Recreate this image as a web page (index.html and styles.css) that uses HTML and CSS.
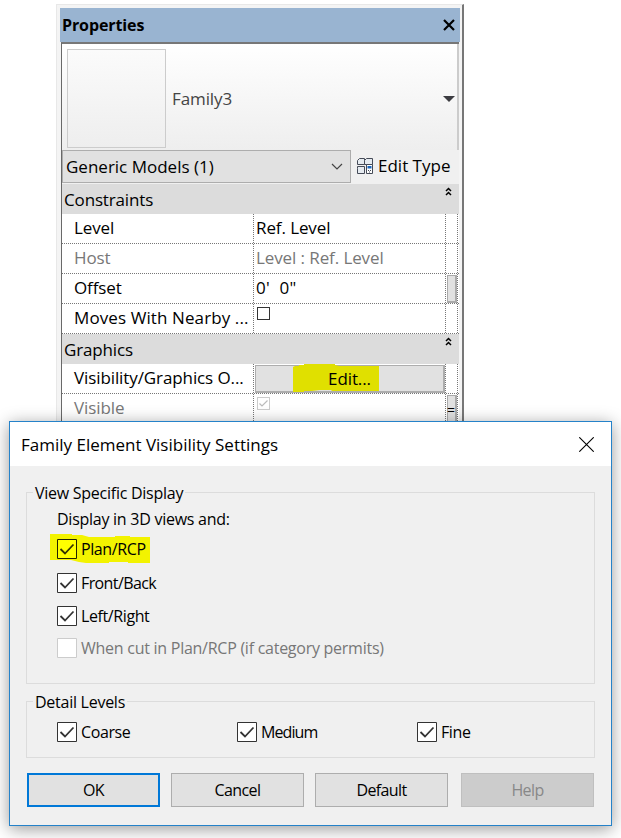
FILE: index.html
```html
<!DOCTYPE html>
<html lang="en">
<head>
    <meta charset="UTF-8">
    <meta name="viewport" content="width=device-width, initial-scale=1.0">
    <title>Family Element Visibility Settings</title>
    <link rel="stylesheet" href="styles.css">
</head>
<body>
    <!-- Properties palette -->
    <div class="palette">
        <div class="palette-title">
            <span>Properties</span>
            <svg width="14" height="12" viewBox="0 0 14 12"><path d="M2 1l10 10M12 1L2 11" stroke="#000" stroke-width="2.2"/></svg>
        </div>
        <div class="palette-body">
            <div class="type-selector">
                <div class="thumb"></div>
                <span>Family3</span>
                <svg width="12" height="6" viewBox="0 0 12 6"><path d="M0 0h12L6 6z" fill="#3c3c41"/></svg>
            </div>
            <div class="filter">
                <div class="combo">
                    <span>Generic Models (1)</span>
                    <svg width="12" height="8" viewBox="0 0 12 8"><path d="M1 1l5 5 5-5" fill="none" stroke="#444" stroke-width="1.2"/></svg>
                </div>
                <div class="edit-type">
                    <svg width="16" height="16" viewBox="0 0 16 16">
                        <path d="M2.500 .5h5v6h-7v-4zM.5 8.500h7v7h-7v-5z" fill="#e6ebf0" stroke="#454b58"/>
                        <path d="M7.500 6.500v-4l2-2h6v6z" fill="#e6ebf0" stroke="#454b58"/>
                        <path d="M9.500 6.500h6v9h-6z" fill="#fff" stroke="#454b58"/>
                        <path d="M10.500 8h4v2.500h-4z" fill="#1c67bd"/>
                        <path d="M11 12.500h1M13 12.500h1M12 14h1" stroke="#454b58"/>
                    </svg>
                    <span>Edit Type</span>
                </div>
            </div>

            <div class="section">
                <span>Constraints</span>
                <svg width="7" height="9" viewBox="0 0 7 9"><path d="M1 4l2.500-2.500L6 4M1 8l2.500-2.500L6 8" fill="none" stroke="#000" stroke-width="1.500"/></svg>
            </div>
            <div class="row">
                <div class="name"><span>Level</span></div>
                <div class="value"><span>Ref. Level</span></div>
                <div class="assoc"></div>
            </div>
            <div class="row disabled">
                <div class="name"><span>Host</span></div>
                <div class="value"><span>Level : Ref. Level</span></div>
                <div class="assoc"></div>
            </div>
            <div class="row">
                <div class="name"><span>Offset</span></div>
                <div class="value offset"><span>0'&nbsp; 0"</span></div>
                <div class="assoc"><i class="assoc-btn"></i></div>
            </div>
            <div class="row">
                <div class="name moves"><span>Moves With Nearby ...</span></div>
                <div class="value"><i class="small-check"></i></div>
                <div class="assoc"></div>
            </div>

            <div class="section">
                <span>Graphics</span>
                <svg width="7" height="9" viewBox="0 0 7 9"><path d="M1 4l2.500-2.500L6 4M1 8l2.500-2.500L6 8" fill="none" stroke="#000" stroke-width="1.500"/></svg>
            </div>
            <div class="row">
                <div class="name"><span>Visibility/Graphics O...</span></div>
                <div class="value edit-cell">
                    <div class="edit-btn">
                        <svg class="marker" width="86" height="29" viewBox="0 0 86 29"><path d="M0 3l2-1h4V1h5V0h31v1l4 1h40v25H39l-1-1H27l-8 1h-8v1H0z" fill="#e0e000"/></svg>
                        <span>Edit...</span>
                    </div>
                </div>
                <div class="assoc"></div>
            </div>
            <div class="row disabled">
                <div class="name"><span>Visible</span></div>
                <div class="value">
                    <i class="small-check off"><svg width="11" height="11" viewBox="0 0 11 11"><path d="M1.500 5.500L4 8l5.500-5.500" fill="none" stroke="#bbb" stroke-width="1.200"/></svg></i>
                </div>
                <div class="assoc"><i class="assoc-btn equals">=</i></div>
            </div>
        </div>
    </div>

    <!-- Visibility dialog -->
    <div class="dialog">
        <div class="dialog-title">
            <span>Family Element Visibility Settings</span>
            <svg width="15" height="15" viewBox="0 0 15 15"><path d="M.3 .3l14.400 14.400M14.700 .3L.3 14.700" stroke="#000" stroke-width="1.100"/></svg>
        </div>
        <div class="dialog-body">
            <fieldset class="display-group">
                <legend>View Specific Display</legend>
                <p>Display in 3D views and:</p>
                <div class="check plan">
                    <svg class="marker" width="100" height="30" viewBox="0 0 100 30"><path d="M0 0h22v1h10l7 2h26V2h15v1h20v26H78v-1H59v1H36l-7-1-8-2H0z" fill="#f3f300"/></svg>
                    <svg class="box" width="20" height="20" viewBox="0 0 20 20"><path d="M.5 .5h19v19H.5z" fill="#ff0" stroke="#222200"/><path d="M3.500 10l4.500 4.500L16.500 5.500" fill="none" stroke="#333300" stroke-width="1.800"/></svg>
                    <span>Plan/RCP</span>
                </div>
                <div class="check front">
                    <svg class="box" width="20" height="20" viewBox="0 0 20 20"><path d="M.5 .5h19v19H.5z" fill="#fff" stroke="#333"/><path d="M3.500 10l4.500 4.500L16.500 5.500" fill="none" stroke="#333" stroke-width="1.800"/></svg>
                    <span>Front/Back</span>
                </div>
                <div class="check left">
                    <svg class="box" width="20" height="20" viewBox="0 0 20 20"><path d="M.5 .5h19v19H.5z" fill="#fff" stroke="#333"/><path d="M3.500 10l4.500 4.500L16.500 5.500" fill="none" stroke="#333" stroke-width="1.800"/></svg>
                    <span>Left/Right</span>
                </div>
                <div class="check cut">
                    <svg class="box" width="20" height="20" viewBox="0 0 20 20"><path d="M.5 .5h19v19H.5z" fill="#fff" stroke="#ccc"/></svg>
                    <span>When cut in Plan/RCP (if category permits)</span>
                </div>
            </fieldset>

            <fieldset class="detail-group">
                <legend>Detail Levels</legend>
                <div class="levels">
                    <div class="check">
                        <svg class="box" width="20" height="20" viewBox="0 0 20 20"><path d="M.5 .5h19v19H.5z" fill="#fff" stroke="#333"/><path d="M3.500 10l4.500 4.500L16.500 5.500" fill="none" stroke="#333" stroke-width="1.800"/></svg>
                        <span>Coarse</span>
                    </div>
                    <div class="check medium">
                        <svg class="box" width="20" height="20" viewBox="0 0 20 20"><path d="M.5 .5h19v19H.5z" fill="#fff" stroke="#333"/><path d="M3.500 10l4.500 4.500L16.500 5.500" fill="none" stroke="#333" stroke-width="1.800"/></svg>
                        <span>Medium</span>
                    </div>
                    <div class="check">
                        <svg class="box" width="20" height="20" viewBox="0 0 20 20"><path d="M.5 .5h19v19H.5z" fill="#fff" stroke="#333"/><path d="M3.500 10l4.500 4.500L16.500 5.500" fill="none" stroke="#333" stroke-width="1.800"/></svg>
                        <span>Fine</span>
                    </div>
                </div>
            </fieldset>

            <div class="buttons">
                <button type="button" class="primary">OK</button>
                <button type="button">Cancel</button>
                <button type="button">Default</button>
                <button type="button" class="help" disabled>Help</button>
            </div>
        </div>
    </div>
</body>
</html>
```
FILE: styles.css
```css
* {
    box-sizing: border-box;
}

body {
    margin: 0;
    padding-top: 4px;
    height: 838px;
    overflow: hidden;
    background: #fff;
    color: #000;
    font-family: "Open Sans", "Noto Sans", sans-serif;
    font-size: 17px;
    line-height: 22px;
}

span {
    white-space: nowrap;
}

svg {
    display: block;
    flex: none;
}

/* Properties palette */
.palette {
    width: 408px;
    height: 417px;
    margin-left: 56px;
    padding: 3px 3px 0;
    border-top: 1px solid #e8e8e8;
    border-left: 1px solid #e8e8e8;
    border-right: 2px solid #777;
    background: #f4f4f4;
    overflow: hidden;
}

.palette-title {
    display: flex;
    align-items: center;
    justify-content: space-between;
    width: 400px;
    height: 34px;
    padding: 0 4px 0 2px;
    background: #99b4d1;
    font-weight: 700;
    font-size: 16px;
    letter-spacing: -0.1px;
}

.palette-body {
    width: 398px;
    margin-left: 1px;
    border-top: 2px solid #777;
    border-left: 1px solid #696969;
    background: #f0f0f0;
}

.type-selector {
    display: flex;
    align-items: center;
    height: 106px;
    padding: 3px 2px 0 5px;
    border-right: 2px solid #ccc;
    background: linear-gradient(#fff, #eee);
    color: #444;
    letter-spacing: -0.1px;
}

.type-selector svg {
    margin-left: auto;
}

.thumb {
    width: 99px;
    height: 99px;
    margin-right: 6px;
    border: 1px solid #ccc;
    background: linear-gradient(#fbfbfb, #eee);
}

.filter {
    display: flex;
    height: 34px;
}

.combo {
    display: flex;
    align-items: center;
    justify-content: space-between;
    width: 289px;
    height: 33px;
    padding: 1px 7px 0 3px;
    border: 1px solid #adadad;
    background: #e1e1e1;
}

.edit-type {
    display: flex;
    align-items: center;
    gap: 5px;
    margin-left: 6px;
    padding-bottom: 3px;
}

.section {
    display: flex;
    justify-content: space-between;
    height: 30px;
    padding: 5px 7px 0 2px;
    background: #dcdcdc;
    letter-spacing: -0.15px;
}

.section svg {
    margin-top: -2px;
}

.row {
    display: flex;
    height: 30px;
    border-bottom: 1px dotted #777;
    background: #fff;
    letter-spacing: -0.1px;
}

.name {
    width: 191px;
    padding: 3px 0 0 12px;
}

.name.moves {
    letter-spacing: 0.1px;
}

.value {
    width: 192px;
    padding: 3px 0 0 2px;
    border-left: 1px dotted #777;
}

.offset {
    letter-spacing: 0.3px;
}

.assoc {
    width: 13px;
    border-left: 1px dotted #777;
    border-right: 1px dotted #777;
}

.disabled {
    color: #777;
}

.assoc-btn {
    display: block;
    width: 10px;
    height: 28px;
    margin: 1px 0 0 1px;
    border: 1px solid #aaa;
    border-right-width: 2px;
    border-bottom-width: 2px;
    background: #e1e1e1;
}

.equals {
    color: #000;
    font-size: 14px;
    font-style: normal;
    line-height: 28px;
    text-indent: -1px;
}

.small-check {
    display: block;
    width: 13px;
    height: 13px;
    margin: 0 1px;
    border: 1px solid #333;
}

.small-check.off {
    border-color: #ccc;
}

.value.edit-cell {
    padding: 1px 0 0 1px;
}

.edit-btn {
    position: relative;
    width: 190px;
    height: 28px;
    border: 1px solid #adadad;
    border-right-width: 2px;
    border-bottom-width: 2px;
    background: #e1e1e1;
    text-align: center;
    line-height: 26px;
}

.edit-btn span {
    position: relative;
}

.marker {
    position: absolute;
}

.edit-btn .marker {
    left: 37px;
    top: -2px;
}

/* Dialog */
.dialog {
    position: relative;
    width: 603px;
    height: 405px;
    margin-left: 9px;
    border: 1px solid #2582c9;
    background: #f0f0f0;
    box-shadow: 0 3px 16px rgba(0, 0, 0, 0.4);
    font-size: 16px;
    letter-spacing: -0.26px;
}

.dialog-title {
    display: flex;
    align-items: center;
    justify-content: space-between;
    height: 44px;
    padding: 0 17px 0 11px;
    background: #fff;
    font-size: 17px;
    letter-spacing: 0;
}

.dialog-title span {
    padding-top: 2px;
}

.dialog-body {
    padding: 15px 16px;
}

fieldset {
    min-width: 0;
    margin: 0;
    border: 1px solid #dcdcdc;
    padding: 0;
}

legend {
    height: 22px;
    margin-left: 6px;
    padding: 0 2px;
    line-height: 24px;
}

p {
    margin: 5px 0 0 30px;
}

.display-group {
    height: 203px;
}

.detail-group {
    height: 68px;
    margin-top: 6px;
}

.check {
    position: relative;
    display: flex;
    align-items: center;
    height: 20px;
    gap: 4px;
    margin-left: 30px;
    letter-spacing: -0.4px;
}

.check .box,
.check span {
    position: relative;
}

.plan {
    margin-top: 9px;
}

.plan .marker {
    left: -7px;
    top: -5px;
}

.front {
    margin-top: 14px;
    letter-spacing: -0.6px;
}

.left {
    margin-top: 13px;
}

.cut {
    margin-top: 12px;
    color: #777;
    letter-spacing: -0.26px;
}

.levels {
    display: grid;
    grid-template-columns: 180px 180px 180px;
    margin-top: 10px;
}

.medium {
    letter-spacing: -0.9px;
}

.buttons {
    display: flex;
    gap: 11px;
    margin: 15px 0 0 1px;
}

button {
    width: 133px;
    height: 34px;
    padding: 0;
    border: 1px solid #adadad;
    background: #e1e1e1;
    color: #000;
    font-family: inherit;
    font-size: 16px;
    letter-spacing: -0.6px;
}

.primary {
    border: 2px solid #0078d7;
}

.help {
    margin-left: 2px;
    border-color: #bfbfbf;
    background: #ccc;
    color: #888;
}
```
